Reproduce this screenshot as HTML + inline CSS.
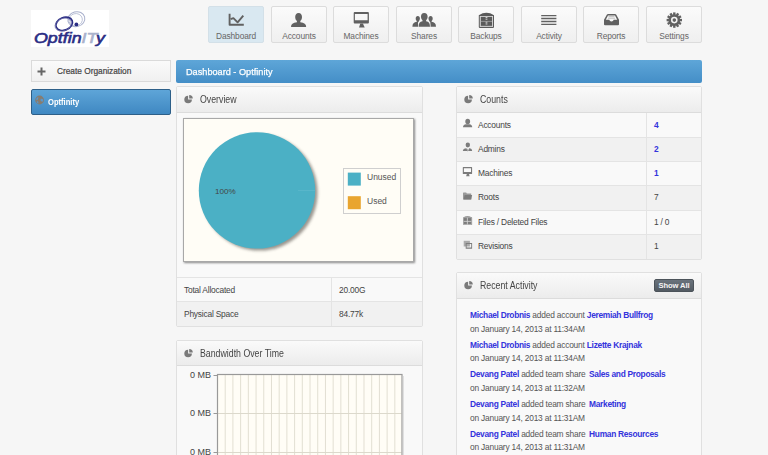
<!DOCTYPE html>
<html><head><meta charset="utf-8">
<style>
*{margin:0;padding:0;box-sizing:border-box}
html,body{width:768px;height:455px;overflow:hidden}
body{background:#f6f6f6;font-family:"Liberation Sans",sans-serif;position:relative;color:#555}
.a{position:absolute}
.logo{left:31px;top:10px;width:78px;height:37px;background:#fff}
.nb{top:6px;width:56px;height:37px;border:1px solid #dcdcdc;border-radius:2px;background:linear-gradient(#fbfbfb,#efefef);}
.nb.act{background:#d9e8f1;border-color:#d3e0e8}
.nb .t{position:absolute;left:-1px;right:-1px;top:24px;text-align:center;font-size:8.4px;letter-spacing:-.1px;color:#666;line-height:10px}
.nb svg{position:absolute;left:-1px;top:0}
.side1{left:31px;top:60px;width:140px;height:22px;border:1px solid #dadada;background:linear-gradient(#fafafa,#f0f0f0)}
.side2{left:31px;top:89px;width:140px;height:26px;border:1px solid #2d5f88;border-radius:2px;background:linear-gradient(#5ea5d8,#3f88c2)}
.bar{left:176px;top:60px;width:526px;height:23px;border-radius:2px;background:linear-gradient(#5ea6d8,#448ec7)}
.cond{position:absolute;transform-origin:0 0;white-space:nowrap;line-height:12px}
.panel{border:1px solid #e0e0e0;background:#f9f9f9;border-radius:2px}
.ph{position:absolute;left:0;right:0;top:0;height:26px;border-bottom:1px solid #dcdcdc;background:linear-gradient(#fafafa,#ececec)}
.ph .cond{left:23px;top:6px;font-size:10.5px;color:#454545;transform:scaleX(.835)}
.ph svg{position:absolute;left:7px;top:8px}
.row{position:absolute;left:0;right:0;height:25px;border-top:1px solid #e4e4e4;font-size:8.4px;letter-spacing:-.2px;color:#444;line-height:10px}
.row span{position:absolute;top:7px}
.alt{background:#f1f1f1}
.cnt .row span{top:6px}
.lnk{color:#3434dc;font-weight:bold}
.act1 .lnk{letter-spacing:-.3px}
.act1{position:absolute;left:13px;font-size:8.4px;letter-spacing:-.2px;line-height:13.6px;color:#555;white-space:nowrap}
</style></head><body>

<div class="a logo">
<svg width="78" height="37" viewBox="0 0 78 37">
  <g fill="none" stroke="#a9b0cc">
    <ellipse cx="45.3" cy="9.2" rx="8.6" ry="7.4" transform="rotate(-15 45.3 9.2)" stroke-width="1"/>
    <ellipse cx="44.6" cy="9.8" rx="6.8" ry="6.2" transform="rotate(-15 44.6 9.8)" stroke-width=".7"/>
  </g>
  <g fill="none" stroke="#2b2d84">
    <ellipse cx="33.2" cy="13.8" rx="8.6" ry="6.3" transform="rotate(-22 33.2 13.8)" stroke-width="1.7"/>
    <ellipse cx="32.2" cy="14.6" rx="8.4" ry="6.2" transform="rotate(-22 32.2 14.6)" stroke-width=".7" stroke="#6a6ca8"/>
  </g>
  <circle cx="45.4" cy="14.4" r="1.9" fill="#2b2d84"/>
  <text x="3" y="33.4" font-family="Liberation Sans" font-style="italic" font-size="14.5" fill="#2b2d84" stroke="#2b2d84" stroke-width=".6" textLength="71" lengthAdjust="spacingAndGlyphs">Optfin<tspan fill="#aab2cc" stroke="#aab2cc">IT</tspan>y</text>
</svg>
</div>

<div class="a nb act" style="left:208px"><svg width="56" height="36">
  <g fill="none" stroke="#616161" stroke-width="1.9" stroke-linejoin="round"><path d="M21.6 6.7V17.8H35.8"/><path d="M22.6 12.2L25.4 11.1L29.6 15.3L35.3 8.7"/></g>
</svg><div class="t">Dashboard</div></div>

<div class="a nb" style="left:271px"><svg width="56" height="36">
  <path fill="#616161" d="M27.6 6C25.3 6 24.2 7.7 24.2 10C24.2 11.8 24.9 13.2 25.9 14.1V15.2C22 15.7 20 17 20 20H35.2C35.2 17 33.2 15.7 29.3 15.2V14.1C30.3 13.2 31 11.8 31 10C31 7.7 29.9 6 27.6 6Z"/>
</svg><div class="t">Accounts</div></div>

<div class="a nb" style="left:333px"><svg width="56" height="36">
  <g fill="#616161"><path fill-rule="evenodd" d="M21.7 5H34.9Q35.9 5 35.9 6V15.4Q35.9 16.4 34.9 16.4H21.7Q20.7 16.4 20.7 15.4V6Q20.7 5 21.7 5ZM21.9 7V13.3H34.6V7Z"/><path d="M27.3 16.4H29.9L31.7 20.6H26Z"/></g>
</svg><div class="t">Machines</div></div>

<div class="a nb" style="left:396px"><svg width="56" height="36">
  <g fill="#616161">
    <path d="M21.8 8.9C20.4 8.9 19.7 10 19.7 11.5C19.7 12.6 20.1 13.5 20.8 14V14.8C18 15.3 16.4 16.5 16.4 19.7H22V15.5C22.7 14.8 23.9 13.2 23.9 11.5C23.9 10 23.2 8.9 21.8 8.9Z"/>
    <path d="M34.6 8.9C36 8.9 36.7 10 36.7 11.5C36.7 12.6 36.3 13.5 35.6 14V14.8C38.4 15.3 40 16.5 40 19.7H34.4V15.5C33.7 14.8 32.5 13.2 32.5 11.5C32.5 10 33.2 8.9 34.6 8.9Z"/>
    <path stroke="#f3f3f3" stroke-width=".8" paint-order="stroke" d="M28.2 5.9C26 5.9 25 7.5 25 9.6C25 11.2 25.6 12.5 26.5 13.3V14.3C23.8 14.8 22.6 16.2 22.6 19.7H34C34 16.2 32.8 14.8 30.1 14.3V13.3C31 12.5 31.6 11.2 31.6 9.6C31.6 7.5 30.5 5.9 28.2 5.9Z"/>
  </g>
</svg><div class="t">Shares</div></div>

<div class="a nb" style="left:458px"><svg width="56" height="36">
  <path d="M20.8 8.3Q28.4 3.4 36 8.3V20.1Q36 20.9 35.2 20.9H21.6Q20.8 20.9 20.8 20.1Z" fill="#5a5a5a"/>
  <rect x="21.8" y="9" width="13.2" height="10.9" fill="#e4e4e4"/>
  <rect x="22.5" y="9.6" width="11.8" height="9.7" fill="#9a9a9a"/>
  <g fill="#5a5a5a"><rect x="23" y="10" width="11" height="3.9"/><rect x="23" y="14.8" width="11" height="3.9"/></g>
  <g fill="#e8e8e8"><rect x="27.6" y="10" width="1.8" height=".8"/><rect x="27.6" y="11.7" width="1.8" height=".9"/><rect x="27.6" y="14.8" width="1.8" height=".8"/><rect x="27.6" y="16.5" width="1.8" height=".9"/></g>
</svg><div class="t">Backups</div></div>

<div class="a nb" style="left:521px"><svg width="56" height="36">
  <g stroke="#616161" stroke-width="1.3"><path d="M20.2 8.6H35.4M20.2 11.5H35.4M20.2 14.5H35.4M20.2 17.4H35.4"/></g>
</svg><div class="t">Activity</div></div>

<div class="a nb" style="left:583px"><svg width="56" height="36">
  <g fill="#616161"><path fill-rule="evenodd" d="M25.1 7H32Q32.8 7 33.3 7.8L36 12.8V17.2Q36 18.2 35 18.2H22Q21 18.2 21 17.2V12.8L23.8 7.8Q24.3 7 25.1 7ZM25 8.4L22.8 12.8H26.3Q26.6 14.4 28.5 14.4Q30.4 14.4 30.7 12.8H34.2L32 8.4Z"/></g>
  <g stroke="#9a9a9a" stroke-width=".6"><path d="M25.6 9.6H31.4M25 11.2H32"/></g>
</svg><div class="t">Reports</div></div>

<div class="a nb" style="left:646px"><svg width="56" height="36">
  <g transform="translate(28.3 13.1)">
    <g fill="#616161">
      <circle r="5.9"/>
      <g id="teeth"><rect x="-1.2" y="-7.7" width="2.4" height="3"/><rect x="-1.2" y="4.7" width="2.4" height="3"/></g>
      <use href="#teeth" transform="rotate(30)"/><use href="#teeth" transform="rotate(60)"/><use href="#teeth" transform="rotate(90)"/><use href="#teeth" transform="rotate(120)"/><use href="#teeth" transform="rotate(150)"/>
    </g>
    <circle r="3.3" fill="#f3f3f3"/><circle r="1.8" fill="#616161"/>
  </g>
</svg><div class="t">Settings</div></div>

<div class="a side1">
  <svg class="a" style="left:5px;top:6px" width="9" height="9"><path d="M4.5 0.5V8.5M0.5 4.5H8.5" stroke="#666" stroke-width="2"/></svg>
  <div class="a" style="left:25px;top:5px;font-size:8.3px;line-height:10px;color:#444;white-space:nowrap;-webkit-text-stroke:.2px #444">Create Organization</div>
</div>
<div class="a side2">
  <svg class="a" style="left:3px;top:5px" width="10" height="10"><circle cx="4.6" cy="5" r="4.4" fill="#877c6f"/><path d="M1.4 3.4Q2.4 1.9 3.4 2.2L3 4.6Q2.2 5.4 1.2 4.8Z M1.6 6.4L3 6.2L3.6 8.6Q2.2 8.2 1.6 6.4Z M5.6 3.8Q7.2 3.4 8.2 4.2Q8.4 6.4 7.6 6.8L5.6 6Z" fill="#5a97cb"/></svg>
  <div class="cond" style="left:16px;top:6px;font-size:9.8px;font-weight:bold;color:#fff;transform:scaleX(.775)">Optfinity</div>
</div>
<div class="a bar">
  <div class="cond" style="left:10px;top:6px;font-size:9.8px;color:#fff;transform:scaleX(.935);-webkit-text-stroke:.25px #fff">Dashboard - Optfinity</div>
</div>

<!-- Overview -->
<div class="a panel" style="left:176px;top:86px;width:247px;height:241px">
  <div class="ph"><svg width="10" height="10"><path d="M4.1 0.7A3.8 3.8 0 1 0 7.9 4.5H4.1Z" fill="#7a7a7a"/><path d="M5.2 0A3.6 3.6 0 0 1 8.8 3.6H5.2Z" fill="#7a7a7a"/></svg><div class="cond">Overview</div></div>
  <div class="a" style="left:6px;top:31px;width:231px;height:144px;background:#fffdf6;border:1px solid #a8a8a8;box-shadow:1px 1px 2px #8a8a8a"></div>
  <svg class="a" style="left:6px;top:31px" width="232" height="144">
    <defs><filter id="bl" x="-10%" y="-10%" width="120%" height="120%"><feGaussianBlur stdDeviation="1.6"/></filter></defs><circle cx="76.6" cy="74.6" r="58" fill="#8f8b84" opacity=".9" filter="url(#bl)"/>
    <circle cx="74" cy="72.4" r="58.2" fill="#4bb0c5"/>
    <path d="M115 72.5H132" stroke="#62bacc" stroke-width=".6"/>
    <text x="32" y="75.5" font-size="8.1" fill="#444" font-family="Liberation Sans">100%</text>
    <rect x="160.5" y="50.5" width="57" height="45" fill="#fffdf6" stroke="#cfcfcf" stroke-width="1"/>
    <rect x="164.8" y="54.6" width="13" height="13" fill="#4bb0c5"/>
    <rect x="164.8" y="78.2" width="13" height="13" fill="#e9a52f"/>
    <text x="184" y="62" font-size="8.5" fill="#555" font-family="Liberation Sans">Unused</text>
    <text x="184" y="86" font-size="8.5" fill="#555" font-family="Liberation Sans">Used</text>
  </svg>
  <div class="row" style="top:190px;height:24px"><span style="left:7px">Total Allocated</span><span style="left:162px">20.00G</span></div>
  <div class="row alt" style="top:214px"><span style="left:7px">Physical Space</span><span style="left:162px">84.77k</span></div>
  <div class="a" style="left:154px;top:190px;width:1px;height:49px;background:#e4e4e4"></div>
</div>

<!-- Bandwidth -->
<div class="a panel" style="left:176px;top:340px;width:247px;height:130px">
  <div class="ph" style="height:25px"><svg width="10" height="10"><path d="M4.1 0.7A3.8 3.8 0 1 0 7.9 4.5H4.1Z" fill="#7a7a7a"/><path d="M5.2 0A3.6 3.6 0 0 1 8.8 3.6H5.2Z" fill="#7a7a7a"/></svg><div class="cond">Bandwidth Over Time</div></div>
  <svg class="a" style="left:-176px;top:-340px" width="768" height="455">
    <rect x="216.5" y="374" width="184.5" height="90" fill="#fffdf6"/>
    <g stroke="#e2dfd2" stroke-width="1" transform="translate(0.5 374)"><path d="M223.71 0V100" /><path d="M231.42 0V100" /><path d="M239.13 0V100" /><path d="M246.84 0V100" /><path d="M254.55 0V100" /><path d="M262.26 0V100" /><path d="M269.97 0V100" /><path d="M277.68 0V100" /><path d="M285.39 0V100" /><path d="M293.10 0V100" /><path d="M300.81 0V100" /><path d="M308.52 0V100" /><path d="M316.23 0V100" /><path d="M323.94 0V100" /><path d="M331.65 0V100" /><path d="M339.36 0V100" /><path d="M347.07 0V100" /><path d="M354.78 0V100" /><path d="M362.49 0V100" /><path d="M370.20 0V100" /><path d="M377.91 0V100" /><path d="M385.62 0V100" /><path d="M393.33 0V100" /></g>
    <g stroke="#dcd9cc" stroke-width="1"><path d="M216 412.5H400.5M216 451.5H400.5"/></g>
    <g stroke="#999" stroke-width="1"><path d="M212.5 374.5H216M212.5 412.5H216M212.5 451.5H216"/></g>
    <rect x="216.5" y="373.5" width="184.5" height="100" fill="none" stroke="#999" stroke-width="1.2"/>
    <path d="M402 375V460" stroke="#c8c8c8" stroke-width="1"/>
    <g font-family="Liberation Sans" font-size="9" fill="#444" text-anchor="end"><text x="210" y="376.5">0 MB</text><text x="210" y="415">0 MB</text><text x="210" y="453.8">0 MB</text></g>
  </svg>
</div>

<!-- Counts -->
<div class="a panel cnt" style="left:456px;top:86px;width:246px;height:174px">
  <div class="ph"><svg width="10" height="10"><path d="M4.1 0.7A3.8 3.8 0 1 0 7.9 4.5H4.1Z" fill="#7a7a7a"/><path d="M5.2 0A3.6 3.6 0 0 1 8.8 3.6H5.2Z" fill="#7a7a7a"/></svg><div class="cond">Counts</div></div>
<div class="row" style="top:27px;height:23px;border-top:0"><span style="left:21px">Accounts</span><span style="left:197px" class="lnk">4</span></div>
<div class="row alt" style="top:50px;height:24px"><span style="left:21px">Admins</span><span style="left:197px" class="lnk">2</span></div>
<div class="row" style="top:74px;height:24px"><span style="left:21px">Machines</span><span style="left:197px" class="lnk">1</span></div>
<div class="row alt" style="top:98px;height:25px"><span style="left:21px">Roots</span><span style="left:197px">7</span></div>
<div class="row" style="top:123px;height:24px"><span style="left:21px">Files / Deleted Files</span><span style="left:197px">1 / 0</span></div>
<div class="row alt" style="top:147px;height:25px"><span style="left:21px">Revisions</span><span style="left:197px">1</span></div>
<div class="a" style="left:189px;top:26px;width:1px;height:146px;background:#e4e4e4"></div>
<svg class="a" style="left:-457px;top:-87px" width="768" height="455"><g fill="#7c7c7c">
<ellipse cx="467.7" cy="121.5" rx="2.4" ry="2.7"/><path d="M463 127.2Q463 124.6 466 124.2H469.4Q472.2 124.6 472.2 127.2Z"/>
<ellipse cx="467.8" cy="145" rx="2.2" ry="2.4"/><path d="M462.8 151Q463 148.5 466.5 148.2L467.4 151Z"/><path d="M468.2 151L469.1 148.2Q472.1 148.5 472.1 151Z"/><path d="M467.8 148.6L468.3 150L467.8 151.8L467.3 150Z"/>
<path fill-rule="evenodd" d="M463.3 167H471.6Q472.1 167 472.1 167.5V173.4Q472.1 173.9 471.6 173.9H463.3Q462.8 173.9 462.8 173.4V167.5Q462.8 167 463.3 167ZM463.9 168.2V171.9H471V168.2Z"/><path d="M466.8 173.9H469L469.6 176.3H466.1Z"/>
<path fill="#9a9a9a" d="M463 199.6V193Q463 192.5 463.5 192.5H466.2L466.8 193.4H471.2V199.6Z"/><path d="M464.6 195H472.1L471.2 199.6H463.6Z"/>
<path d="M463 217.6Q467.5 215 472.1 217.6V224.7H463Z"/>
<path fill="#aaa" d="M463.7 240.8h6.2v5.7h-6.2z"/><path fill-rule="evenodd" d="M465.7 243h6.4v5.7h-6.4zM466.6 244v3.6h4.6v-3.6z"/>
</g><g fill="#d8d8d8"><rect x="466.9" y="217.6" width=".8" height="7.1"/><rect x="463.7" y="220.9" width="7.7" height=".8"/></g>
<rect x="463.6" y="217.8" width="7.9" height="6.4" fill="none" stroke="#c8c8c8" stroke-width=".5"/>
</svg>
</div>

<!-- Recent Activity -->
<div class="a panel" style="left:456px;top:272px;width:246px;height:200px">
  <div class="ph"><svg width="10" height="10"><path d="M4.1 0.7A3.8 3.8 0 1 0 7.9 4.5H4.1Z" fill="#7a7a7a"/><path d="M5.2 0A3.6 3.6 0 0 1 8.8 3.6H5.2Z" fill="#7a7a7a"/></svg><div class="cond">Recent Activity</div></div>
<div class="act1" style="top:36.0px"><span class="lnk">Michael Drobnis</span> added account <span class="lnk">Jeremiah Bullfrog</span><br>on January 14, 2013 at 11:34AM</div>
<div class="act1" style="top:65.7px"><span class="lnk">Michael Drobnis</span> added account <span class="lnk">Lizette Krajnak</span><br>on January 14, 2013 at 11:34AM</div>
<div class="act1" style="top:95.4px"><span class="lnk">Devang Patel</span> added team share <span class="lnk" style="margin-left:1.5px">Sales and Proposals</span><br>on January 14, 2013 at 11:32AM</div>
<div class="act1" style="top:125.1px"><span class="lnk">Devang Patel</span> added team share <span class="lnk" style="margin-left:1.5px">Marketing</span><br>on January 14, 2013 at 11:31AM</div>
<div class="act1" style="top:154.8px"><span class="lnk">Devang Patel</span> added team share <span class="lnk" style="margin-left:1.5px">Human Resources</span><br>on January 14, 2013 at 11:31AM</div>
<div class="a" style="left:197px;top:6px;width:40px;height:13px;border-radius:2px;background:linear-gradient(#6a737c,#525a62);border:1px solid #4c535a;color:#f4f4f4;font-size:7.6px;font-weight:bold;line-height:11px;text-align:center;letter-spacing:-.1px">Show All</div>
</div>

</body></html>
